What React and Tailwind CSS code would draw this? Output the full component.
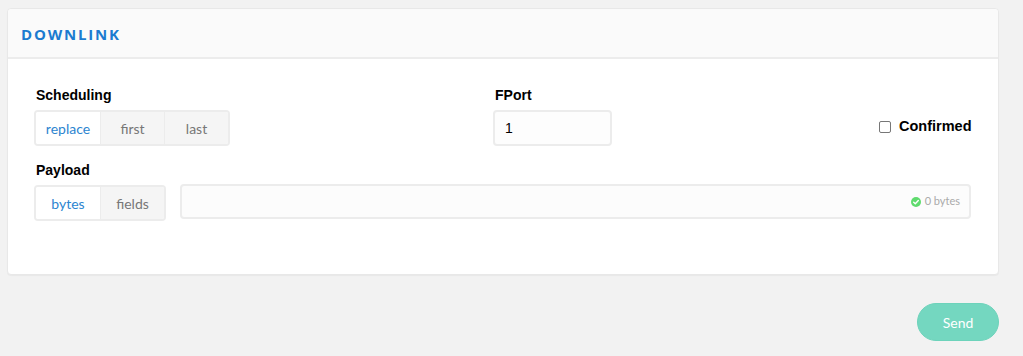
import React from "react";

const Segmented = ({ options, active }) => (
  <div className="flex h-[36px] border-2 border-[#ececec] rounded-[4px] overflow-hidden">
    {options.map((o, i) => (
      <div
        key={o}
        className={
          "w-[64px] flex items-center justify-center text-[14px] " +
          (o === active ? "bg-white text-[#2c85d0]" : "bg-[#f5f5f5] text-[#777]") +
          (i > 0 ? " border-l border-[#ececec]" : "")
        }
      >
        {o}
      </div>
    ))}
  </div>
);

const App = () => {
  return (
    <div className="w-[1023px] h-[356px] bg-[#f2f2f2] pt-[8px] pl-[7px] font-['Lato',sans-serif] overflow-hidden">
      <div className="w-[992px] bg-white rounded-[4px] border border-[#e8e8e8] shadow-[0_1px_1px_rgba(0,0,0,0.04)]">
        <div className="h-[50px] bg-[#fafafa] border-b-2 border-[#ececec] rounded-t-[4px] flex items-center pl-[13px] pt-[3px]">
          <h2 className="text-[#1b7bd0] font-bold text-[15px] tracking-[0.12em] font-['Open_Sans',sans-serif]">
            DOWNLINK
          </h2>
        </div>
        <div className="pl-[26px] pr-[26px] pt-[27px] pb-[53px]">
          <div className="flex items-start">
            <div className="w-[459px]">
              <div className="text-[14px] font-bold text-black font-['Liberation_Sans',sans-serif] pl-[2px] mb-[6px] leading-[18px]">
                Scheduling
              </div>
              <div className="inline-block">
                <Segmented options={["replace", "first", "last"]} active="replace" />
              </div>
            </div>
            <div className="w-[268px]">
              <div className="text-[14px] font-bold text-black font-['Liberation_Sans',sans-serif] pl-[2px] mb-[6px] leading-[18px]">
                FPort
              </div>
              <div className="w-[119px] h-[36px] border-2 border-[#ececec] rounded-[4px] bg-[#fdfdfd] flex items-center pl-[10px] text-[14px] text-black font-['Liberation_Sans',sans-serif]">
                1
              </div>
            </div>
            <label className="mt-[30px] ml-[118px] flex items-center gap-[8px] text-[14px] font-bold text-black font-['Liberation_Sans',sans-serif]">
              <span className="w-[12px] h-[12px] border border-[#777] rounded-[2px] bg-white" />
              <span className="text-[14.5px]">Confirmed</span>
            </label>
          </div>
          <div className="mt-[15px]">
            <div className="text-[14px] font-bold text-black font-['Liberation_Sans',sans-serif] pl-[2px] mb-[6px] leading-[18px]">
              Payload
            </div>
            <div className="flex items-start gap-[14px]">
              <Segmented options={["bytes", "fields"]} active="bytes" />
              <div className="-mt-[1px] w-[791px] h-[35px] border-2 border-[#ececec] rounded-[4px] bg-[#fcfcfc] flex items-center justify-end pr-[9px] gap-[4px]">
                <svg width="10" height="10" viewBox="0 0 10 10">
                  <circle cx="5" cy="5" r="5" fill="#5fdb6e" />
                  <path d="M2.7 5.2 L4.3 6.7 L7.3 3.6" stroke="white" strokeWidth="1.4" fill="none" strokeLinecap="round" strokeLinejoin="round" />
                </svg>
                <span className="text-[11px] text-[#aaa]">0 bytes</span>
              </div>
            </div>
          </div>
        </div>
      </div>
      <div className="w-[992px] flex justify-end mt-[28px]">
        <button className="w-[82px] h-[38px] rounded-full bg-[#74d7c0] border border-[#6dd3bb] text-white text-[14px]">
          Send
        </button>
      </div>
    </div>
  );
};

export default App;
